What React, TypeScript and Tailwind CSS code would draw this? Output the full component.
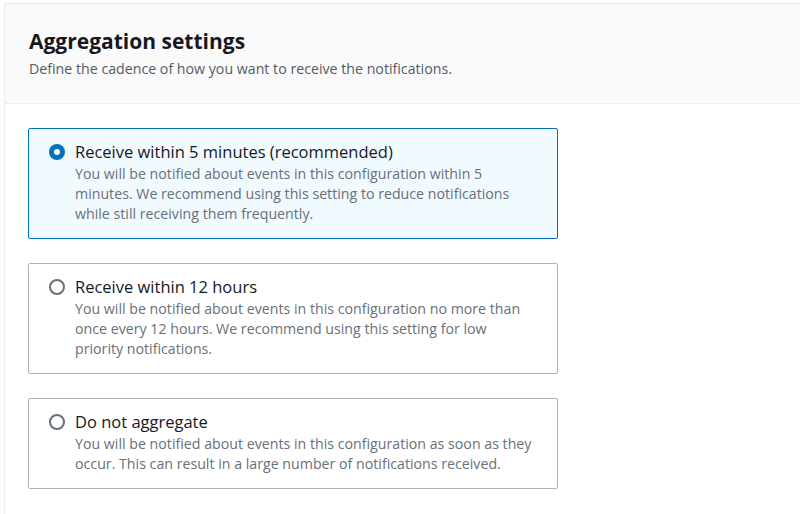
export default function App() {
  const opts = [
    { t: "Receive within 5 minutes (recommended)", d: "You will be notified about events in this configuration within 5 minutes. We recommend using this setting to reduce notifications while still receiving them frequently.", sel: true },
    { t: "Receive within 12 hours", d: "You will be notified about events in this configuration no more than once every 12 hours. We recommend using this setting for low priority notifications.", sel: false },
    { t: "Do not aggregate", d: "You will be notified about events in this configuration as soon as they occur. This can result in a large number of notifications received.", sel: false },
  ];
  return (
    <div className="w-[800px] h-[514px] bg-white overflow-hidden pt-[3px] pl-[4px]" style={{ fontFamily: '"Open Sans", "Liberation Sans", sans-serif' }}>
      <div className="border-l border-t border-[#eaeded] h-full">
        <div className="bg-[#fafafa] border-b border-[#eaeded] h-[100px] pl-[24px] pt-[22px]">
          <div className="text-[21px] font-bold text-[#16191f] leading-[30px]">Aggregation settings</div>
          <div className="text-[14.2px] text-[#545b64] leading-[22px] mt-[2px]">Define the cadence of how you want to receive the notifications.</div>
        </div>
        <div className="pl-[23px] pt-[24px] flex flex-col gap-[24px]">
          {opts.map((o, i) => (
            <div key={i} className={`w-[530px] rounded-[2px] border px-[20px] pt-[12px] pb-[14px] flex gap-[10px] ${o.sel ? "border-[#0073bb] bg-[#f1faff]" : "border-[#aab7b8] bg-white"}`}>
              <div className="pt-[3px]">
                {o.sel ? (
                  <div className="w-[16px] h-[16px] rounded-full bg-[#0073bb] flex items-center justify-center"><div className="w-[6px] h-[6px] rounded-full bg-white" /></div>
                ) : (
                  <div className="w-[16px] h-[16px] rounded-full border-2 border-[#687078] bg-white" />
                )}
              </div>
              <div>
                <div className="text-[16.5px] text-[#16191f] leading-[22px]">{o.t}</div>
                <div className="text-[14.2px] text-[#687078] leading-[20px] mt-[1px]">{o.d}</div>
              </div>
            </div>
          ))}
        </div>
      </div>
    </div>
  );
}
